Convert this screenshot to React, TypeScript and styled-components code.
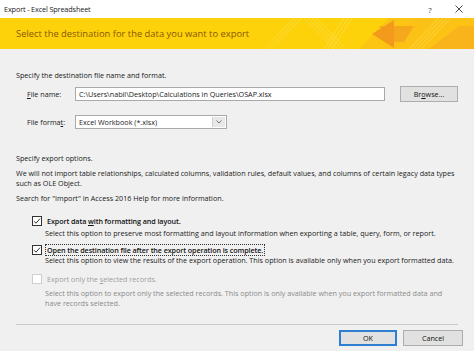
import React from "react";
import styled, { createGlobalStyle } from "styled-components";

const Global = createGlobalStyle`
  html, body { margin: 0; padding: 0; }
  body {
    width: 474px; height: 351px; overflow: hidden;
    background: #f0f0f0;
    font-family: "Open Sans", "Noto Sans", sans-serif;
    color: #1a1a1a;
  }
`;

const Window = styled.div`
  width: 474px;
  height: 351px;
  display: flex;
  flex-direction: column;
  background: #f0f0f0;
`;

const TitleBar = styled.div`
  height: 18px;
  background: #ffffff;
  display: flex;
  align-items: center;
  padding-left: 4px;
  font-size: 7.3px;
  letter-spacing: -0.15px;
  color: #222;
`;

const TitleText = styled.div`
  flex: 1;
`;

const TitleButton = styled.div<{ $w: number }>`
  width: ${(p) => p.$w}px;
  display: flex;
  align-items: center;
  justify-content: center;
  font-size: 8px;
  color: #444;
`;

const Banner = styled.div`
  position: relative;
  height: 31px;
  background: #fdd20a;
  display: flex;
  align-items: center;
  padding-left: 16px;
  overflow: hidden;
`;

const BannerArt = styled.svg`
  position: absolute;
  right: 0;
  top: 0;
`;

const BannerText = styled.div`
  position: relative;
  font-size: 9.4px;
  color: #8a5600;
`;

const Body = styled.div`
  flex: 1;
  padding: 0 16px;
  display: flex;
  flex-direction: column;
  white-space: nowrap;
`;

const Text = styled.div<{ $mt: number }>`
  font-size: 7.2px;
  line-height: 10px;
  margin-top: ${(p) => p.$mt}px;
`;

const FieldRow = styled.div<{ $mt: number }>`
  display: flex;
  align-items: center;
  margin-top: ${(p) => p.$mt}px;
  padding-left: 11px;
`;

const FieldLabel = styled.div`
  width: 48px;
  font-size: 7.2px;
`;

const Input = styled.div`
  width: 305px;
  height: 12px;
  background: #fff;
  border: 1px solid #a9a9a9;
  font-size: 7.2px;
  line-height: 12px;
  padding-left: 3px;
`;

const Button = styled.div<{ $w: number; $default?: boolean }>`
  width: ${(p) => p.$w}px;
  height: ${(p) => (p.$default ? 12 : 14)}px;
  background: #e1e1e1;
  border: ${(p) => (p.$default ? "2px solid #2e7fd0" : "1px solid #adadad")};
  display: flex;
  align-items: center;
  justify-content: center;
  font-size: 7.2px;
  color: #111;
`;

const Spacer = styled.div<{ $w: number }>`
  width: ${(p) => p.$w}px;
  flex: none;
`;

const Select = styled.div`
  width: 150px;
  height: 12px;
  background: #fff;
  border: 1px solid #a9a9a9;
  display: flex;
  align-items: center;
  font-size: 7.2px;
`;

const SelectValue = styled.div`
  flex: 1;
  padding-left: 3px;
`;

const SelectArrow = styled.div`
  width: 12px;
  height: 10px;
  margin-right: 1px;
  background: #e8e8e8;
  border-left: 1px solid #cfcfcf;
  display: flex;
  align-items: center;
  justify-content: center;
`;

const OptionRow = styled.div<{ $mt: number }>`
  display: flex;
  align-items: center;
  margin-top: ${(p) => p.$mt}px;
  padding-left: 16px;
`;

const Box = styled.div<{ $disabled?: boolean }>`
  width: 8px;
  height: 8px;
  border: 1px solid ${(p) => (p.$disabled ? "#cfcfcf" : "#333")};
  background: #fff;
  display: flex;
  align-items: center;
  justify-content: center;
  margin-right: 4px;
`;

const OptionLabel = styled.div<{ $disabled?: boolean; $focus?: boolean }>`
  font-size: 7.2px;
  font-weight: ${(p) => (p.$disabled ? 400 : 600)};
  letter-spacing: ${(p) => (p.$disabled ? 0 : -0.1)}px;
  color: ${(p) => (p.$disabled ? "#a0a0a0" : "#111")};
  outline: ${(p) => (p.$focus ? "1px dotted #333" : "none")};
  padding: 0 1px;
  line-height: 10px;
`;

const Desc = styled.div<{ $mt: number; $disabled?: boolean }>`
  font-size: 7.2px;
  line-height: ${(p) => (p.$disabled ? 10 : 9)}px;
  margin-top: ${(p) => p.$mt}px;
  padding-left: 29px;
  color: ${(p) => (p.$disabled ? "#8a8a8a" : "#222")};
`;

const Separator = styled.div`
  height: 1px;
  background: #c8c8c8;
  margin-top: auto;
`;

const Footer = styled.div`
  height: 26px;
  display: flex;
  align-items: center;
  justify-content: flex-end;
  padding-right: 11px;
  gap: 6px;
`;

const Check = () => (
  <svg width="8" height="8" viewBox="0 0 8 8">
    <path d="M1 4.2 L3 6.2 L7 1.6" fill="none" stroke="#333" strokeWidth="1" />
  </svg>
);

const U = styled.span`
  text-decoration: underline;
`;

export default function App() {
  return (
    <>
      <Global />
      <Window>
        <TitleBar>
          <TitleText>Export - Excel Spreadsheet</TitleText>
          <TitleButton $w={28}>?</TitleButton>
          <TitleButton $w={30}>
            <svg width="8" height="8" viewBox="0 0 8 8">
              <path d="M0.5 0.5 L7.5 7.5 M7.5 0.5 L0.5 7.5" stroke="#333" strokeWidth="0.9" />
            </svg>
          </TitleButton>
        </TitleBar>
        <Banner>
          <BannerArt width="230" height="31" viewBox="0 0 230 31">
            <defs>
              <linearGradient id="og" x1="0" x2="1" y1="0" y2="0">
                <stop offset="0" stopColor="#f6a21a" />
                <stop offset="1" stopColor="#fbbf1a" />
              </linearGradient>
              <linearGradient id="fade" x1="0" x2="1">
                <stop offset="0" stopColor="#fdd20a" stopOpacity="1" />
                <stop offset="1" stopColor="#fdd20a" stopOpacity="0" />
              </linearGradient>
            </defs>
            <polygon points="145,0 190,0 160,31 115,31" fill="#fcc514" />
            <polygon points="170,0 230,0 230,31 140,31" fill="#fbbf18" opacity="0.8" />
            <polygon points="135,8 165,8 150,24" fill="url(#og)" />
            <polygon points="128,16 150,2 150,30" fill="#f39a1d" />
            <polygon points="150,8 170,8 160,24 150,24" fill="#f6a81c" />
            <polygon points="185,31 215,8 230,8 230,31" fill="#f9b41b" />
            <g stroke="#fde26a" strokeWidth="0.6" opacity="0.9">
              <line x1="20" y1="31" x2="50" y2="0" />
              <line x1="24" y1="31" x2="54" y2="0" />
              <line x1="28" y1="31" x2="58" y2="0" />
              <line x1="60" y1="0" x2="90" y2="31" />
              <line x1="64" y1="0" x2="94" y2="31" />
              <line x1="68" y1="0" x2="98" y2="31" />
              <line x1="72" y1="0" x2="102" y2="31" />
              <line x1="100" y1="0" x2="80" y2="31" />
              <line x1="104" y1="0" x2="84" y2="31" />
              <line x1="108" y1="0" x2="88" y2="31" />
              <line x1="165" y1="31" x2="195" y2="0" />
              <line x1="169" y1="31" x2="199" y2="0" />
              <line x1="173" y1="31" x2="203" y2="0" />
              <line x1="177" y1="31" x2="207" y2="0" />
            </g>
            <rect x="0" y="0" width="40" height="31" fill="url(#fade)" />
          </BannerArt>
          <BannerText>Select the destination for the data you want to export</BannerText>
        </Banner>
        <Body>
          <Text $mt={21}>Specify the destination file name and format.</Text>
          <FieldRow $mt={6}>
            <FieldLabel>
              <U>F</U>ile name:
            </FieldLabel>
            <Input>C:\Users\nabil\Desktop\Calculations in Queries\OSAP.xlsx</Input>
            <Spacer $w={15} />
            <Button $w={56}>
              Br<U>o</U>wse...
            </Button>
          </FieldRow>
          <FieldRow $mt={13}>
            <FieldLabel>
              File forma<U>t</U>:
            </FieldLabel>
            <Select>
              <SelectValue>Excel Workbook (*.xlsx)</SelectValue>
              <SelectArrow>
                <svg width="6" height="4" viewBox="0 0 6 4">
                  <path d="M0.5 0.5 L3 3 L5.5 0.5" fill="none" stroke="#555" strokeWidth="0.8" />
                </svg>
              </SelectArrow>
            </Select>
          </FieldRow>
          <Text $mt={24}>Specify export options.</Text>
          <Text $mt={5}>
            We will not import table relationships, calculated columns, validation rules, default values, and columns of certain legacy data types
            <br />
            such as OLE Object.
          </Text>
          <Text $mt={5}>Search for "Import" in Access 2016 Help for more information.</Text>
          <OptionRow $mt={13}>
            <Box>
              <Check />
            </Box>
            <OptionLabel>
              Export data <U>w</U>ith formatting and layout.
            </OptionLabel>
          </OptionRow>
          <Desc $mt={3}>Select this option to preserve most formatting and layout information when exporting a table, query, form, or report.</Desc>
          <OptionRow $mt={7}>
            <Box>
              <Check />
            </Box>
            <OptionLabel $focus>
              Open the destination file after the export operation is complete.
            </OptionLabel>
          </OptionRow>
          <Desc $mt={1}>Select this option to view the results of the export operation. This option is available only when you export formatted data.</Desc>
          <OptionRow $mt={9}>
            <Box $disabled />
            <OptionLabel $disabled>
              Export only the <U>s</U>elected records.
            </OptionLabel>
          </OptionRow>
          <Desc $mt={4} $disabled>
            Select this option to export only the selected records. This option is only available when you export formatted data and
            <br />
            have records selected.
          </Desc>
          <Separator />
        </Body>
        <Footer>
          <Button $w={54} $default>
            OK
          </Button>
          <Button $w={58}>Cancel</Button>
        </Footer>
      </Window>
    </>
  );
}
